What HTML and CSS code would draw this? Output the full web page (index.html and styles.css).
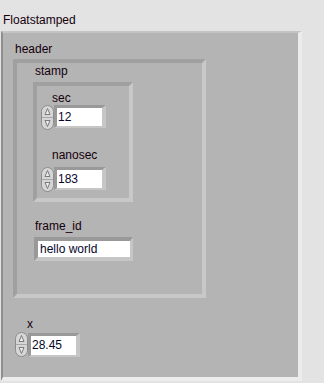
FILE: index.html
```html
<!DOCTYPE html>
<html>
<head>
<meta charset="utf-8">
<link rel="stylesheet" href="styles.css">
</head>
<body>
<div class="title">Floatstamped</div>
<div class="cluster-outer">
  <div class="label header-label">header</div>
  <div class="frame header-frame">
    <div class="label stamp-label">stamp</div>
    <div class="frame stamp-frame">
      <div class="label sec-label">sec</div>
      <div class="numeric sec-num">
        <svg class="spin" width="13" height="25" viewBox="0 0 13 25">
          <rect x="0.5" y="0.5" width="12" height="24" rx="6" ry="6" fill="#d6d6d6" stroke="#8c8c8c"/>
          <line x1="1" y1="12.5" x2="12" y2="12.5" stroke="#a8a8a8"/>
          <path d="M6.5 3.5 L9 9.5 L4 9.5 Z" fill="#ececec" stroke="#7a7a7a"/>
          <path d="M6.5 21.5 L9 15.5 L4 15.5 Z" fill="#ececec" stroke="#7a7a7a"/>
        </svg>
        <div class="box">12</div>
      </div>
      <div class="label nano-label">nanosec</div>
      <div class="numeric nano-num">
        <svg class="spin" width="13" height="25" viewBox="0 0 13 25">
          <rect x="0.5" y="0.5" width="12" height="24" rx="6" ry="6" fill="#d6d6d6" stroke="#8c8c8c"/>
          <line x1="1" y1="12.5" x2="12" y2="12.5" stroke="#a8a8a8"/>
          <path d="M6.5 3.5 L9 9.5 L4 9.5 Z" fill="#ececec" stroke="#7a7a7a"/>
          <path d="M6.5 21.5 L9 15.5 L4 15.5 Z" fill="#ececec" stroke="#7a7a7a"/>
        </svg>
        <div class="box">183</div>
      </div>
    </div>
    <div class="label fid-label">frame_id</div>
    <div class="textbox">hello world</div>
  </div>
  <div class="label x-label">x</div>
  <div class="numeric x-num">
    <svg class="spin" width="13" height="25" viewBox="0 0 13 25">
      <rect x="0.5" y="0.5" width="12" height="24" rx="6" ry="6" fill="#d6d6d6" stroke="#8c8c8c"/>
      <line x1="1" y1="12.5" x2="12" y2="12.5" stroke="#a8a8a8"/>
      <path d="M6.5 3.5 L9 9.5 L4 9.5 Z" fill="#ececec" stroke="#7a7a7a"/>
      <path d="M6.5 21.5 L9 15.5 L4 15.5 Z" fill="#ececec" stroke="#7a7a7a"/>
    </svg>
    <div class="box">28.45</div>
  </div>
</div>
</body>
</html>
```
FILE: styles.css
```css
html, body {
  margin: 0;
  padding: 0;
}
body {
  background: #e3e3e3;
  font-family: "Liberation Sans", Arial, sans-serif;
  font-size: 12px;
  line-height: 14px;
  color: #14000c;
  padding-top: 13px;
  width: 324px;
  height: 383px;
  box-sizing: border-box;
  overflow: hidden;
}
.title {
  padding-left: 3px;
  height: 14px;
  margin-bottom: 4px;
}
.cluster-outer {
  box-sizing: border-box;
  margin-left: 1px;
  width: 301px;
  height: 350px;
  background: #b4b4b4;
  border-left: 2px solid #8e8e8e;
  border-top: 2px solid #c4c4c4;
  border-right: 4px solid #ececec;
  border-bottom: 4px solid #ececec;
  display: flex;
  flex-direction: column;
  align-items: flex-start;
}
.label {
  height: 14px;
  white-space: nowrap;
}
.frame {
  box-sizing: border-box;
  border-style: solid;
  border-width: 4px;
  border-color: #a0a0a0 #c8c8c8 #c8c8c8 #a0a0a0;
  display: flex;
  flex-direction: column;
  align-items: flex-start;
}
.header-label {
  margin: 9px 0 3px 12px;
}
.header-frame {
  margin-left: 10px;
  width: 193px;
  height: 239px;
}
.stamp-label {
  margin: 1px 0 4px 18px;
}
.stamp-frame {
  margin-left: 16px;
  width: 100px;
  height: 120px;
}
.sec-label {
  margin: 5px 0 0 15px;
}
.numeric {
  display: flex;
  align-items: flex-start;
}
.spin {
  display: block;
  flex: none;
}
.box {
  box-sizing: border-box;
  width: 52px;
  height: 23px;
  background: #ffffff;
  border-style: solid;
  border-width: 3px 4px 2px 3px;
  border-color: #999999 #c6c6c6 #c6c6c6 #999999;
  padding-left: 1px;
  color: #06062a;
  font-size: 12px;
  line-height: 18px;
}
.sec-num {
  margin-left: 4px;
}
.nano-label {
  margin: 18px 0 0 15px;
}
.nano-num {
  margin: 5px 0 0 4px;
}
.fid-label {
  margin: 17px 0 0 18px;
}
.textbox {
  box-sizing: border-box;
  margin: 4px 0 0 17px;
  width: 99px;
  height: 24px;
  background: #ffffff;
  border-style: solid;
  border-width: 4px 3px 4px 4px;
  border-color: #999999 #c6c6c6 #c6c6c6 #999999;
  padding-left: 2px;
  color: #06062a;
  line-height: 16px;
}
.x-label {
  margin: 19px 0 0 24px;
}
.x-num {
  margin: 1px 0 0 12px;
}
.x-num .box {
  margin-top: 1px;
  height: 24px;
}
```
